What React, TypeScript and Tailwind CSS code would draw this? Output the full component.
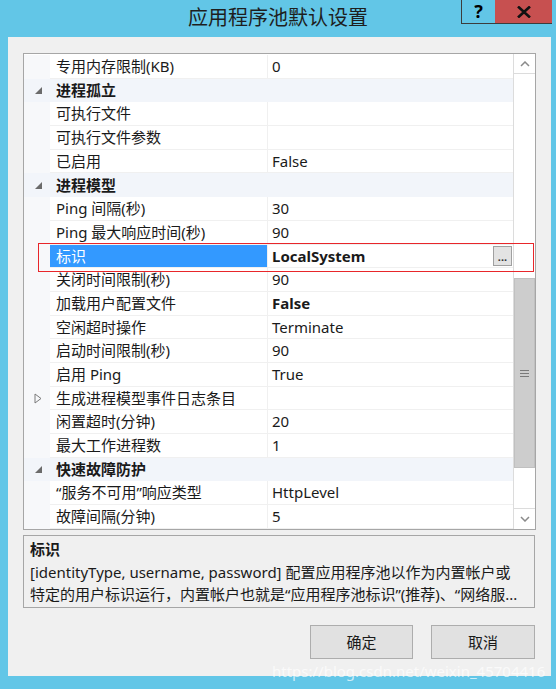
import React from "react";

type Row = {
  name?: string;
  value?: string;
  header?: boolean;
  bold?: boolean;
  selected?: boolean;
  collapsed?: boolean;
};

const rows: Row[] = [
  { name: "专用内存限制(KB)", value: "0" },
  { name: "进程孤立", header: true },
  { name: "可执行文件", value: "" },
  { name: "可执行文件参数", value: "" },
  { name: "已启用", value: "False" },
  { name: "进程模型", header: true },
  { name: "Ping 间隔(秒)", value: "30" },
  { name: "Ping 最大响应时间(秒)", value: "90" },
  { name: "标识", value: "LocalSystem", bold: true, selected: true },
  { name: "关闭时间限制(秒)", value: "90" },
  { name: "加载用户配置文件", value: "False", bold: true },
  { name: "空闲超时操作", value: "Terminate" },
  { name: "启动时间限制(秒)", value: "90" },
  { name: "启用 Ping", value: "True" },
  { name: "生成进程模型事件日志条目", value: "", collapsed: true },
  { name: "闲置超时(分钟)", value: "20" },
  { name: "最大工作进程数", value: "1" },
  { name: "快速故障防护", header: true },
  { name: "“服务不可用”响应类型", value: "HttpLevel" },
  { name: "故障间隔(分钟)", value: "5" },
];

const font = { fontFamily: '"Noto Sans", "Noto Sans CJK SC", sans-serif' };

function Expanded() {
  return (
    <svg width="7" height="7" viewBox="0 0 7 7">
      <polygon points="7,0 7,7 0,7" fill="#6b6b6b" />
    </svg>
  );
}

function Collapsed() {
  return (
    <svg width="8" height="11" viewBox="0 0 8 11">
      <polygon points="1,1 7,5.5 1,10" fill="none" stroke="#7a7a7a" strokeWidth="1" />
    </svg>
  );
}

function GridRow({ row }: { row: Row }) {
  if (row.header) {
    return (
      <div className="flex h-[23.7px] bg-[#f2f5fa]">
        <div className="w-[26px] flex items-center justify-center pl-[2px]">
          <Expanded />
        </div>
        <div className="flex-1 flex items-center pl-[6px] font-bold text-[15px] text-[#1a1a1a]">
          {row.name}
        </div>
      </div>
    );
  }
  return (
    <div className="flex h-[23.7px]">
      <div className="w-[26px] bg-[#f7f8fa] flex items-center justify-center pl-[2px]">
        {row.collapsed && <Collapsed />}
      </div>
      <div
        className={`w-[218px] flex items-center pl-[6px] border-b border-r border-[#f0f0f0] text-[15px] ${
          row.selected ? "bg-[#3399ff] text-white" : "bg-white text-[#1a1a1a]"
        }`}
      >
        {row.name}
      </div>
      <div className="flex-1 flex items-center pl-[4px] pr-[1px] border-b border-[#f0f0f0] bg-white text-[15px] text-[#1a1a1a]">
        <span className={row.bold ? "font-bold" : ""}>{row.value}</span>
        {row.selected && (
          <div className="ml-auto w-[19px] h-[20px] bg-[#e3e3e3] border border-[#a0a0a0] flex items-end justify-center pb-[3px] text-[11px] leading-none font-bold text-[#333]">
            ...
          </div>
        )}
      </div>
    </div>
  );
}

function Chevron({ up }: { up?: boolean }) {
  return (
    <svg width="10" height="6" viewBox="0 0 10 6">
      <polyline
        points={up ? "1,5 5,1 9,5" : "1,1 5,5 9,1"}
        fill="none"
        stroke="#8a8a8a"
        strokeWidth="1.5"
      />
    </svg>
  );
}

export default function App() {
  return (
    <div className="relative w-[556px] h-[689px] overflow-hidden bg-[#62c6e7]" style={font}>
      {/* title bar */}
      <div className="relative h-[37px] flex items-center justify-center">
        <span className="text-[20px] text-[#1e1e1e] pb-[1px]">应用程序池默认设置</span>
        <div className="absolute right-[4px] top-0 flex h-[24px]">
          <div className="w-[34px] border-l border-b border-[#3c3c3c] flex items-center justify-center text-[18px] font-bold text-black">
            ?
          </div>
          <div className="w-[57px] bg-[#c75050] border-b border-[#3c3c3c] flex items-center justify-center">
            <svg width="14" height="12" viewBox="0 0 14 12">
              <path d="M1 0.5 L13 11.5 M13 0.5 L1 11.5" stroke="#111" strokeWidth="2.6" />
            </svg>
          </div>
        </div>
      </div>

      {/* dialog body */}
      <div className="ml-[8px] w-[543px] h-[639px] bg-[#f0f0f0] pt-[16px] pl-[15px]">
        <div className="relative w-[513px] h-[477px] border border-[#a6a6a6] flex bg-white">
          <div className="w-[489px] overflow-hidden pt-[1px]">
            {rows.map((r, i) => (
              <GridRow key={i} row={r} />
            ))}
          </div>
          <div className="w-[22px] border-l border-[#dcdcdc] flex flex-col bg-white">
            <div className="h-[20px] border-b border-[#dcdcdc] flex items-center justify-center">
              <Chevron up />
            </div>
            <div className="flex-1 flex flex-col pt-[204px] pb-[40px]">
              <div className="flex-1 bg-[#cdcdcd] border border-[#c0c0c0] flex items-center justify-center">
                <div className="flex flex-col gap-[2px]">
                  <div className="w-[9px] h-[1px] bg-[#7a7a7a]" />
                  <div className="w-[9px] h-[1px] bg-[#7a7a7a]" />
                  <div className="w-[9px] h-[1px] bg-[#7a7a7a]" />
                </div>
              </div>
            </div>
            <div className="h-[21px] border-t border-[#dcdcdc] flex items-center justify-center">
              <Chevron />
            </div>
          </div>
          {/* highlight annotation */}
          <div className="absolute left-[14px] top-[189px] w-[496px] h-[29px] border border-[#e8262a]" />
        </div>

        {/* description */}
        <div className="mt-[5px] w-[512px] h-[73px] border border-[#a6a6a6] px-[6px] pt-[2px] text-[15px] leading-[22.5px] text-[#1a1a1a]">
          <div className="font-bold">标识</div>
          <div className="whitespace-nowrap overflow-hidden">
            [identityType, username, password] 配置应用程序池以作为内置帐户或
          </div>
          <div className="whitespace-nowrap overflow-hidden">
            特定的用户标识运行，内置帐户也就是“应用程序池标识”(推荐)、“网络服...
          </div>
        </div>

        {/* buttons */}
        <div className="mt-[17px] w-[512px] flex justify-end gap-[18px]">
          <button className="w-[103px] h-[34px] bg-[#e1e1e1] border border-[#adadad] text-[15px] text-[#1a1a1a]">
            确定
          </button>
          <button className="w-[104px] h-[34px] bg-[#e1e1e1] border border-[#adadad] text-[15px] text-[#1a1a1a]">
            取消
          </button>
        </div>
      </div>

      {/* watermark */}
      <div className="absolute left-[272px] top-[660px] whitespace-nowrap text-[15px] text-white/70">
        https://blog.csdn.net/weixin_45704416
      </div>
    </div>
  );
}
